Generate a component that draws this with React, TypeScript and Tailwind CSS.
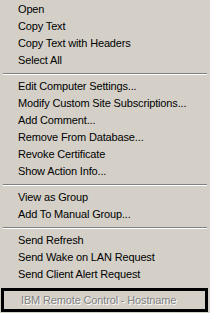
const groups: string[][] = [
  ["Open", "Copy Text", "Copy Text with Headers", "Select All"],
  [
    "Edit Computer Settings...",
    "Modify Custom Site Subscriptions...",
    "Add Comment...",
    "Remove From Database...",
    "Revoke Certificate",
    "Show Action Info...",
  ],
  ["View as Group", "Add To Manual Group..."],
  ["Send Refresh", "Send Wake on LAN Request", "Send Client Alert Request"],
];

function Separator() {
  return (
    <div className="h-[9px] flex flex-col justify-center px-[3px]">
      <div className="h-px bg-[#808080]" />
      <div className="h-px bg-white" />
    </div>
  );
}

export default function App() {
  return (
    <div
      className="w-[210px] h-[313px] bg-[#d4d0c8] text-black text-[11px] tracking-[-0.15px] overflow-hidden pt-px"
      style={{ fontFamily: '"Liberation Sans", Arial, sans-serif' }}
    >
      {groups.map((items, i) => (
        <div key={i}>
          {i > 0 && <Separator />}
          {items.map((label) => (
            <div key={label} className="h-[17px] flex items-center pl-[18px] whitespace-nowrap">
              {label}
            </div>
          ))}
        </div>
      ))}
      <div className="h-[5px]" />
      <div className="mx-[1px] w-[207px] h-[24px] border-[3px] border-black flex items-center pl-[17px]">
        <span className="text-[#808080] [text-shadow:1px_1px_0_#ffffff] whitespace-nowrap">
          IBM Remote Control - Hostname
        </span>
      </div>
    </div>
  );
}
